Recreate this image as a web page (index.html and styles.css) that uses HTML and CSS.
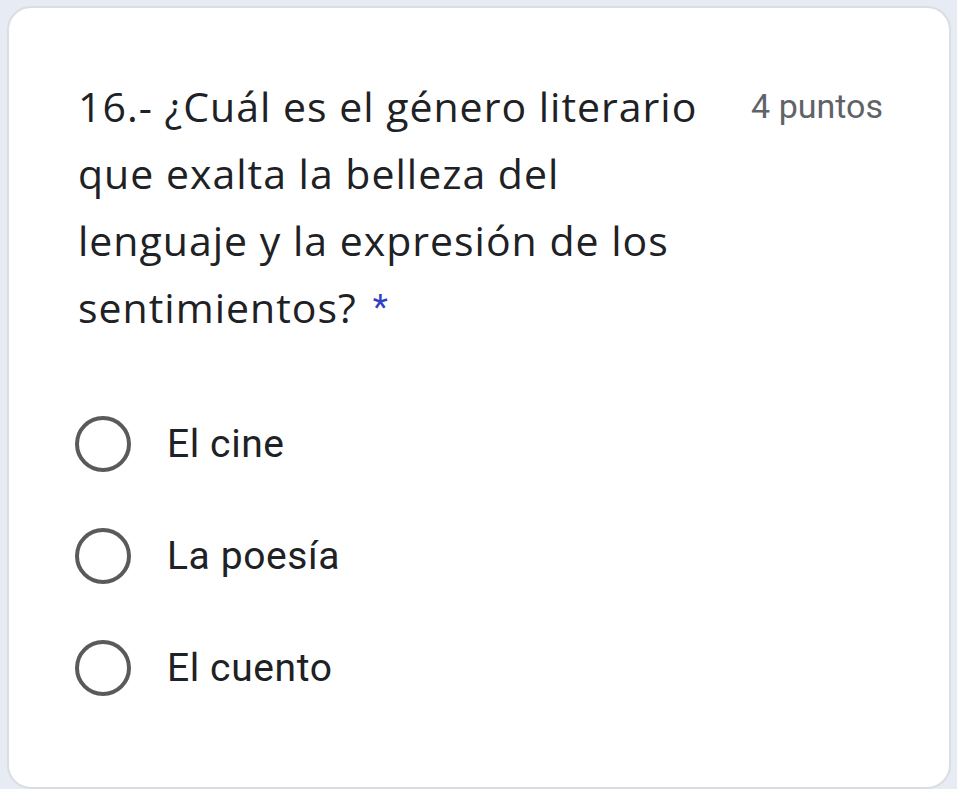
FILE: index.html
```html
<!DOCTYPE html>
<html lang="es">
<head>
<meta charset="utf-8">
<title>Pregunta 16</title>
<link rel="stylesheet" href="styles.css">
</head>
<body>
<div class="page">
  <div class="card">
    <div class="header">
      <div class="title">16.- ¿Cuál es el género literario que exalta la belleza del lenguaje y la expresión de los sentimientos?<span class="req">*</span></div>
      <div class="points">4 puntos</div>
    </div>
    <div class="options">
      <label class="option"><span class="radio"></span><span class="label">El cine</span></label>
      <label class="option"><span class="radio"></span><span class="label">La poesía</span></label>
      <label class="option"><span class="radio"></span><span class="label">El cuento</span></label>
    </div>
  </div>
</div>
</body>
</html>
```

FILE: styles.css
```css
html, body {
  margin: 0;
  padding: 0;
  background: #e7ebf3;
  height: 100%;
  overflow: hidden;
}
.page {
  padding: 6px 6px 0 7px;
  height: 789px;
  box-sizing: border-box;
}
.card {
  background: #ffffff;
  border: 2px solid #dadde3;
  border-radius: 24px;
  height: 783px;
  box-sizing: border-box;
  padding: 65px 66px 0 69px;
}
.header {
  display: flex;
  align-items: flex-start;
}
.title {
  width: 630px;
  font-family: "Open Sans", "Liberation Sans", sans-serif;
  font-size: 41px;
  letter-spacing: 1px;
  line-height: 67px;
  color: #202124;
}
.req {
  display: inline-block;
  margin-left: 16px;
  font-family: Roboto, "Liberation Sans", sans-serif;
  font-size: 35px;
  line-height: 40px;
  letter-spacing: 0;
  color: #3040c4;
  vertical-align: 4px;
}
.points {
  margin-left: auto;
  font-family: Roboto, "Liberation Sans", sans-serif;
  font-size: 34px;
  line-height: 67px;
  color: #5f6368;
}
.options {
  display: flex;
  flex-direction: column;
  margin-top: 75px;
  margin-left: -3px;
  gap: 56px;
}
.option {
  display: flex;
  align-items: center;
  height: 56px;
}
.radio {
  width: 56px;
  height: 56px;
  border: 4.5px solid #5a5a5a;
  border-radius: 50%;
  box-sizing: border-box;
  flex: none;
}
.label {
  margin-left: 36px;
  font-family: Roboto, "Liberation Sans", sans-serif;
  font-size: 39px;
  letter-spacing: 0.6px;
  color: #202124;
}
```
